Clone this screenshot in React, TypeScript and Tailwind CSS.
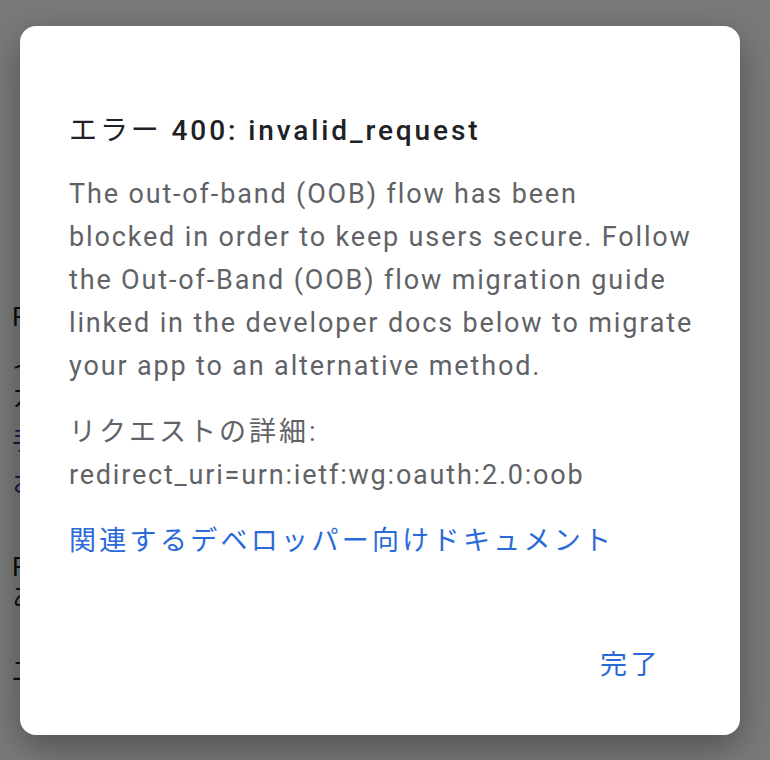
import React from 'react';

const font = { fontFamily: 'Roboto, "Noto Sans CJK JP", sans-serif' };

// Only a sliver of the page under the modal is visible at the left edge
function BackgroundPage() {
  return (
    <div className="pl-[12px] pt-[302px] text-[26px] leading-[30px] text-[#202124]" style={font}>
      <div className="mb-[20px]">F</div>
      <div>イ</div>
      <div className="mb-[14px]">カ</div>
      <div className="text-[#1a3a9a]">手</div>
      <div className="mb-[54px] mt-[12px] text-[#1a3a9a]">お</div>
      <div>F</div>
      <div className="mb-[44px]">あ</div>
      <div>二</div>
    </div>
  );
}

function ErrorDialog() {
  return (
    <div className="w-[720px] h-[709px] bg-white rounded-[16px] shadow-[0_12px_36px_rgba(0,0,0,0.35)] flex flex-col px-[49px] pt-[85px] pb-[50px]" style={font}>
      <h1 className="text-[28px] leading-[40px] tracking-[2.9px] text-[#202124] whitespace-nowrap">
        <span className="font-normal">エラー </span>
        <span className="font-medium">400: invalid_request</span>
      </h1>
      <p className="mt-[22px] text-[27px] leading-[43px] tracking-[1.85px] text-[#5f6368] whitespace-nowrap">
        The out-of-band (OOB) flow has been
        <br />
        blocked in order to keep users secure. Follow
        <br />
        the Out-of-Band (OOB) flow migration guide
        <br />
        linked in the developer docs below to migrate
        <br />
        your app to an alternative method.
      </p>
      <div className="mt-[23px] text-[27px] leading-[43px] text-[#5f6368] whitespace-nowrap">
        <div className="tracking-[3px]">リクエストの詳細:</div>
        <div className="tracking-[1.8px]">redirect_uri=urn:ietf:wg:oauth:2.0:oob</div>
      </div>
      <a className="mt-[23px] text-[27px] leading-[43px] tracking-[3.3px] text-[#2a6ad8] whitespace-nowrap">
        関連するデベロッパー向けドキュメント
      </a>
      <div className="flex-1" />
      <div className="flex justify-end">
        <button className="text-[27px] leading-[40px] tracking-[3.5px] text-[#2a6ad8] mr-[30px]">完了</button>
      </div>
    </div>
  );
}

export default function App() {
  return (
    <div className="relative w-[770px] h-[760px] overflow-hidden bg-white">
      <BackgroundPage />
      <div className="absolute inset-0 bg-[rgba(0,0,0,0.52)] pt-[26px] pl-[20px]">
        <ErrorDialog />
      </div>
    </div>
  );
}
